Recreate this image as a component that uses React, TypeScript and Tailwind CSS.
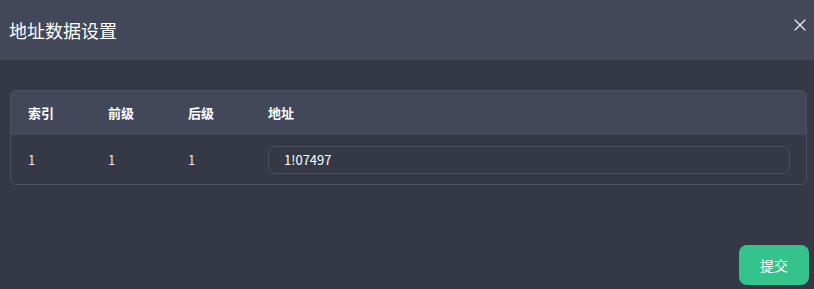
import { X } from 'lucide-react'

const columns = ['索引', '前级', '后级', '地址']

const rows = [{ index: 1, prev: 1, next: 1, address: '1!07497' }]

const App = () => {
    return (
        <div className="w-[814px] h-[289px] bg-[#353946] flex flex-col font-['Noto_Sans_CJK_SC',sans-serif] text-white overflow-hidden">
            <div className="h-[60px] bg-[#424859] flex items-center justify-between pl-[9px] pr-[4px] shrink-0">
                <h1 className="text-[18px] text-white leading-none">地址数据设置</h1>
                <button className="text-white/90 pb-[10px]">
                    <X size={20} strokeWidth={1.4} />
                </button>
            </div>

            <div className="pt-[30px] pl-[10px] pr-[7px]">
                <div className="rounded-[6px] border border-[#4d5263] overflow-hidden">
                    <div className="h-[44px] bg-[#424859] flex items-center text-[13px] font-bold">
                        {columns.map((col) => (
                            <div key={col} className="w-[80px] pl-[17px]">{col}</div>
                        ))}
                    </div>
                    {rows.map((row) => (
                        <div key={row.index} className="h-[49px] flex items-center text-[13px] text-[#e4e7ee]">
                            <div className="w-[80px] pl-[17px]">{row.index}</div>
                            <div className="w-[80px] pl-[17px]">{row.prev}</div>
                            <div className="w-[80px] pl-[17px]">{row.next}</div>
                            <div className="flex-1 pl-[17px] pr-[16px]">
                                <input
                                    defaultValue={row.address}
                                    className="w-full h-[28px] rounded-[8px] border border-[#4d5263] bg-transparent px-[15px] text-[13px] text-white outline-none font-['Noto_Sans_CJK_SC',sans-serif]"
                                />
                            </div>
                        </div>
                    ))}
                </div>
            </div>

            <div className="mt-auto flex justify-end pr-[5px] pb-[4px]">
                <button className="w-[70px] h-[40px] rounded-[8px] bg-[#34c38a] text-white text-[14px]">
                    提交
                </button>
            </div>
        </div>
    )
}

export default App
